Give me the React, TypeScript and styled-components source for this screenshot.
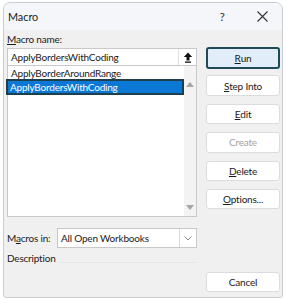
import React from "react";
import styled, { createGlobalStyle } from "styled-components";

const Global = createGlobalStyle`
  html, body { margin: 0; padding: 0; background: #ffffff; }
  body { font-family: Lato, "Noto Sans", sans-serif; font-size: 10px; letter-spacing: -0.2px; color: #1a1a1a; }
`;

const Window = styled.div`
  box-sizing: border-box;
  margin: 2px 3px 0 3px;
  width: 280px;
  height: 296px;
  border: 1px solid #c9cdd2;
  border-radius: 7px 7px 3px 3px;
  background: #f0f0f0;
  display: flex;
  flex-direction: column;
  overflow: hidden;
`;

const TitleBar = styled.div`
  height: 27px;
  flex: none;
  background: #f4f6f9;
  display: flex;
  align-items: center;
  padding: 0 0 0 4px;
`;

const Title = styled.span`
  font-size: 10.8px;
  letter-spacing: 0;
  flex: 1;
  color: #1a1a1a;
`;

const TitleIcon = styled.span<{ $w: number }>`
  width: ${(p) => p.$w}px;
  display: flex;
  justify-content: center;
  align-items: center;
  font-size: 12px;
  color: #333;
`;

const Body = styled.div`
  flex: 1;
  display: flex;
  padding: 2px 0 5px 3px;
  gap: 9px;
`;

const LeftCol = styled.div`
  width: 190px;
  display: flex;
  flex-direction: column;
`;

const Label = styled.div`
  height: 15px;
  line-height: 15px;
  color: #1a1a1a;
`;

const U = styled.span`
  text-decoration: underline;
  text-underline-offset: 1px;
`;

const NameBox = styled.div`
  box-sizing: border-box;
  margin-top: 1px;
  height: 18px;
  background: #fff;
  border: 1px solid #c8c8c8;
  display: flex;
  align-items: center;
  padding-left: 3px;
`;

const NameText = styled.span`
  flex: 1;
`;

const ArrowBtn = styled.span`
  width: 17px;
  height: 100%;
  display: flex;
  align-items: center;
  justify-content: center;
  border-left: 1px solid #e0e0e0;
`;

const List = styled.div`
  box-sizing: border-box;
  height: 151px;
  background: #fff;
  border: 1px solid #c8c8c8;
  border-top: none;
  display: flex;
`;

const Items = styled.div`
  flex: 1;
  display: flex;
  flex-direction: column;
  padding-top: 1px;
`;

const Item = styled.div<{ $sel?: boolean }>`
  box-sizing: border-box;
  height: ${(p) => (p.$sel ? 16 : 12)}px;
  line-height: ${(p) => (p.$sel ? 12 : 13.5)}px;
  padding-left: ${(p) => (p.$sel ? 2 : 3)}px;
  margin-left: ${(p) => (p.$sel ? -2 : 0)}px;
  background: ${(p) => (p.$sel ? "#0a78d4" : "transparent")};
  color: ${(p) => (p.$sel ? "#ffffff" : "#1a1a1a")};
  border: ${(p) => (p.$sel ? "2px solid #1e3f4c" : "none")};
`;

const Scroll = styled.div`
  width: 12px;
  background: #f3f3f3;
  display: flex;
  flex-direction: column;
  justify-content: space-between;
  align-items: center;
  padding: 16px 0 6px;
`;

const Row = styled.div`
  margin-top: 11px;
  display: flex;
  align-items: center;
  height: 20px;
`;

const RowLabel = styled.span`
  width: 50px;
  white-space: nowrap;
`;

const Combo = styled.div`
  box-sizing: border-box;
  flex: 1;
  height: 20px;
  background: #fff;
  border: 1px solid #c8c8c8;
  display: flex;
  align-items: center;
`;

const ComboText = styled.span`
  flex: 1;
  padding-left: 3px;
`;

const ComboBtn = styled.span`
  width: 16px;
  height: 100%;
  border-left: 1px solid #d8d8d8;
  display: flex;
  align-items: center;
  justify-content: center;
`;

const Desc = styled.div`
  margin-top: 1px;
  height: 18px;
  display: flex;
  align-items: center;
  gap: 4px;
`;

const DescLine = styled.span`
  flex: 1;
  height: 1px;
  background: #e6e6e6;
  margin-top: 8px;
`;

const RightCol = styled.div`
  width: 74px;
  display: flex;
  flex-direction: column;
  gap: 8px;
  padding-top: 15px;
`;

const Button = styled.div<{ $primary?: boolean; $disabled?: boolean; $bottom?: boolean }>`
  box-sizing: border-box;
  height: ${(p) => (p.$primary ? 22 : 20.4)}px;
  margin-bottom: ${(p) => (p.$primary ? -1.6 : 0)}px;
  margin-top: ${(p) => (p.$bottom ? "auto" : "0")};
  background: ${(p) => (p.$primary ? "#e1eef9" : "#ffffff")};
  border: ${(p) => (p.$primary ? "2px solid #1f4a57" : "1px solid #dcdcdc")};
  border-radius: 3px;
  display: flex;
  align-items: center;
  justify-content: center;
  color: ${(p) => (p.$disabled ? "#a3a3a3" : "#1a1a1a")};
`;

const UpArrow = () => (
  <svg width="10" height="11" viewBox="0 0 10 11">
    <path d="M5 0.5 L9.2 5 L6.5 5 L6.5 8.5 L3.5 8.5 L3.5 5 L0.8 5 Z" fill="#111" />
    <rect x="2" y="9.5" width="6" height="1.3" fill="#111" />
  </svg>
);

const Tri = ({ up }: { up?: boolean }) => (
  <svg width="8" height="5" viewBox="0 0 8 5">
    <path d={up ? "M0 5 L4 0 L8 5 Z" : "M0 0 L8 0 L4 5 Z"} fill="#a6a6a6" />
  </svg>
);

const Chevron = () => (
  <svg width="8" height="5" viewBox="0 0 8 5">
    <path d="M0.5 0.5 L4 4 L7.5 0.5" fill="none" stroke="#777" strokeWidth="0.9" />
  </svg>
);

const Close = () => (
  <svg width="11" height="11" viewBox="0 0 11 11">
    <path d="M0.5 0.5 L10.5 10.5 M10.5 0.5 L0.5 10.5" stroke="#333" strokeWidth="1.1" />
  </svg>
);

export default function App() {
  return (
    <>
      <Global />
      <Window>
        <TitleBar>
          <Title>Macro</Title>
          <TitleIcon $w={20}>?</TitleIcon>
          <TitleIcon $w={10} />
          <TitleIcon $w={40}>
            <Close />
          </TitleIcon>
        </TitleBar>
        <Body>
          <LeftCol>
            <Label>
              <U>M</U>acro name:
            </Label>
            <NameBox>
              <NameText>ApplyBordersWithCoding</NameText>
              <ArrowBtn>
                <UpArrow />
              </ArrowBtn>
            </NameBox>
            <List>
              <Items>
                <Item>ApplyBorderAroundRange</Item>
                <Item $sel>ApplyBordersWithCoding</Item>
              </Items>
              <Scroll>
                <Tri up />
                <Tri />
              </Scroll>
            </List>
            <Row>
              <RowLabel>
                M<U>a</U>cros in:
              </RowLabel>
              <Combo>
                <ComboText>All Open Workbooks</ComboText>
                <ComboBtn>
                  <Chevron />
                </ComboBtn>
              </Combo>
            </Row>
            <Desc>
              Description
              <DescLine />
            </Desc>
          </LeftCol>
          <RightCol>
            <Button $primary>
              <U>R</U>un
            </Button>
            <Button>
              <U>S</U>tep Into
            </Button>
            <Button>
              <U>E</U>dit
            </Button>
            <Button $disabled>Create</Button>
            <Button>
              <U>D</U>elete
            </Button>
            <Button>
              <U>O</U>ptions...
            </Button>
            <Button $bottom>Cancel</Button>
          </RightCol>
        </Body>
      </Window>
    </>
  );
}
